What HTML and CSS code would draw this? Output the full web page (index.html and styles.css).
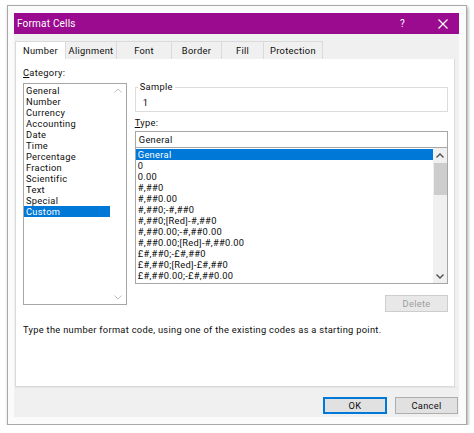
FILE: index.html
```html
<!DOCTYPE html>
<html>
<head>
<meta charset="utf-8">
<link rel="stylesheet" href="styles.css">
</head>
<body>
<div class="window">
  <div class="titlebar">
    <span class="title">Format Cells</span>
    <span class="help">?</span>
    <svg class="close" width="10" height="10" viewBox="0 0 10 10"><path d="M0.5 0.5 L9.5 9.5 M9.5 0.5 L0.5 9.5" stroke="#fff" stroke-width="1.2" fill="none"/></svg>
  </div>
  <div class="body">
    <div class="tabs">
      <div class="tab active">Number</div>
      <div class="tab t-align">Alignment</div>
      <div class="tab t-font">Font</div>
      <div class="tab t-border">Border</div>
      <div class="tab t-fill">Fill</div>
      <div class="tab t-prot">Protection</div>
    </div>
    <div class="panel">
      <div class="cols">
        <div class="left">
          <div class="label"><u>C</u>ategory:</div>
          <div class="catlist">
            <div class="items">
              <div class="item">General</div>
              <div class="item">Number</div>
              <div class="item">Currency</div>
              <div class="item">Accounting</div>
              <div class="item">Date</div>
              <div class="item">Time</div>
              <div class="item">Percentage</div>
              <div class="item">Fraction</div>
              <div class="item">Scientific</div>
              <div class="item">Text</div>
              <div class="item">Special</div>
              <div class="item sel">Custom</div>
            </div>
            <div class="vscroll plain">
              <svg class="arrow" width="8" height="5" viewBox="0 0 8 5"><path d="M0.5 4.5 L4 1 L7.5 4.5" stroke="#c2c2c2" stroke-width="1" fill="none"/></svg>
              <div class="spacer"></div>
              <svg class="arrow" width="8" height="5" viewBox="0 0 8 5"><path d="M0.5 0.5 L4 4 L7.5 0.5" stroke="#c2c2c2" stroke-width="1" fill="none"/></svg>
            </div>
          </div>
        </div>
        <div class="right">
          <fieldset class="sample">
            <legend>Sample</legend>
            <div class="sample-val">1</div>
          </fieldset>
          <div class="label type-label"><u>T</u>ype:</div>
          <div class="typeinput">General</div>
          <div class="typelist">
            <div class="items">
              <div class="item sel">General</div>
              <div class="item">0</div>
              <div class="item">0.00</div>
              <div class="item">#,##0</div>
              <div class="item">#,##0.00</div>
              <div class="item">#,##0;-#,##0</div>
              <div class="item">#,##0;[Red]-#,##0</div>
              <div class="item">#,##0.00;-#,##0.00</div>
              <div class="item">#,##0.00;[Red]-#,##0.00</div>
              <div class="item">£#,##0;-£#,##0</div>
              <div class="item">£#,##0;[Red]-£#,##0</div>
              <div class="item">£#,##0.00;-£#,##0.00</div>
            </div>
            <div class="vscroll">
              <svg class="arrow" width="8" height="5" viewBox="0 0 8 5"><path d="M0.5 4.5 L4 1 L7.5 4.5" stroke="#505050" stroke-width="1.4" fill="none"/></svg>
              <div class="thumb"></div>
              <div class="spacer"></div>
              <svg class="arrow" width="8" height="5" viewBox="0 0 8 5"><path d="M0.5 0.5 L4 4 L7.5 0.5" stroke="#505050" stroke-width="1.4" fill="none"/></svg>
            </div>
          </div>
          <div class="delrow"><div class="btn disabled">Delete</div></div>
        </div>
      </div>
      <div class="desc">Type the number format code, using one of the existing codes as a starting point.</div>
    </div>
    <div class="footer">
      <div class="btn ok">OK</div>
      <div class="btn">Cancel</div>
    </div>
  </div>
</div>
</body>
</html>
```
FILE: styles.css
```css
* { box-sizing: border-box; }
html, body { margin: 0; padding: 0; background: #ffffff; }
body {
  font-family: Roboto, "Noto Sans", sans-serif;
  font-size: 9.3px;
  letter-spacing: 0.3px;
  color: #0d0d0d;
}
.window {
  margin: 5px 0 0 7px;
  width: 460px;
  height: 420px;
  border: 1px solid #a8a8a8;
  background: #fbfbfb;
  padding: 7px 7px 7px 6px;
  box-shadow: 1px 2px 3px rgba(0,0,0,0.35);
  display: flex;
  flex-direction: column;
}
.titlebar {
  height: 21px;
  background: #9b0b8f;
  color: #fff;
  display: flex;
  align-items: center;
  padding-left: 3px;
  flex: none;
}
.title { font-size: 10px; letter-spacing: 0.2px; flex: 1; }
.help { font-size: 10px; margin-right: 33px; }
.close { margin-right: 11px; }
.body {
  flex: 1;
  background: #f0f0f0;
  display: flex;
  flex-direction: column;
  padding: 7px 4px 0 1px;
}
.tabs { display: flex; height: 18px; flex: none; }
.tab {
  height: 18px;
  line-height: 18px;
  text-align: center;
  border: 1px solid #dadada;
  border-bottom: none;
  border-left: none;
  background: #f0f0f0;
}
.tab.active { background: #fff; width: 51px; border-left: 1px solid #dadada; }
.t-align { width: 51px; }
.t-font { width: 55px; }
.t-border { width: 50px; }
.t-fill { width: 42px; }
.t-prot { width: 59px; }
.panel {
  background: #fff;
  height: 328px;
  flex: none;
  border: 1px solid #dadada;
  border-top: none;
  padding: 8px 6px 0 7px;
}
.cols { display: flex; gap: 8px; }
.left { width: 104px; }
.label { line-height: 12px; height: 12px; }
.catlist {
  margin-top: 4px;
  height: 222px;
  border: 1px solid #a6a6a6;
  display: flex;
}
.items { flex: 1; padding-top: 1px; }
.item { height: 11px; line-height: 11px; padding-left: 2px; white-space: nowrap; overflow: hidden; }
.item.sel { background: #0078d7; color: #fff; }
.vscroll {
  width: 14px;
  display: flex;
  flex-direction: column;
  align-items: center;
  background: #f0f0f0;
  padding: 4px 0 4px;
}
.vscroll.plain { background: #fff; width: 16px; }
.spacer { flex: 1; }
.arrow { flex: none; display: block; }
.thumb { width: 13px; height: 32px; background: #cdcdcd; margin-top: 5px; }
.right { width: 314px; padding-top: 14px; }
.sample {
  margin: 0;
  border: 1px solid #dcdcdc;
  padding: 0 0 2px 2px;
  height: 31px;
}
.sample legend { padding: 0 2px; line-height: 12px; }
.sample-val { margin: 4px 0 0 5px; line-height: 12px; }
.type-label { margin-top: 5px; }
.typeinput {
  margin-top: 2px;
  height: 16px;
  border: 1px solid #a6a6a6;
  border-bottom: none;
  line-height: 15px;
  padding-left: 3px;
}
.typelist {
  height: 137px;
  border: 1px solid #a6a6a6;
  display: flex;
}
.typelist .items { padding: 1px 0 0 0; }
.typelist .item { padding-left: 2px; }
.typelist .vscroll { padding-top: 5px; }
.delrow { display: flex; justify-content: flex-end; margin-top: 11px; }
.btn {
  height: 17px;
  line-height: 15px;
  text-align: center;
  border: 1px solid #adadad;
  background: #e1e1e1;
}
.btn.disabled { width: 63px; background: #e8e8e8; border-color: #cdcdcd; color: #9d9d9d; }
.desc { margin-top: 12px; line-height: 12px; padding-left: 0; }
.footer {
  height: 30px;
  display: flex;
  justify-content: flex-end;
  gap: 8px;
  padding: 9px 0 0 0;
  margin-right: -3px;
  border-top: 1px solid #e6e6e6;
}
.footer .btn { width: 63px; }
.footer .btn.ok { width: 64px; border: 1px solid #0078d7; box-shadow: inset 0 0 0 1px #0078d7; }
```
